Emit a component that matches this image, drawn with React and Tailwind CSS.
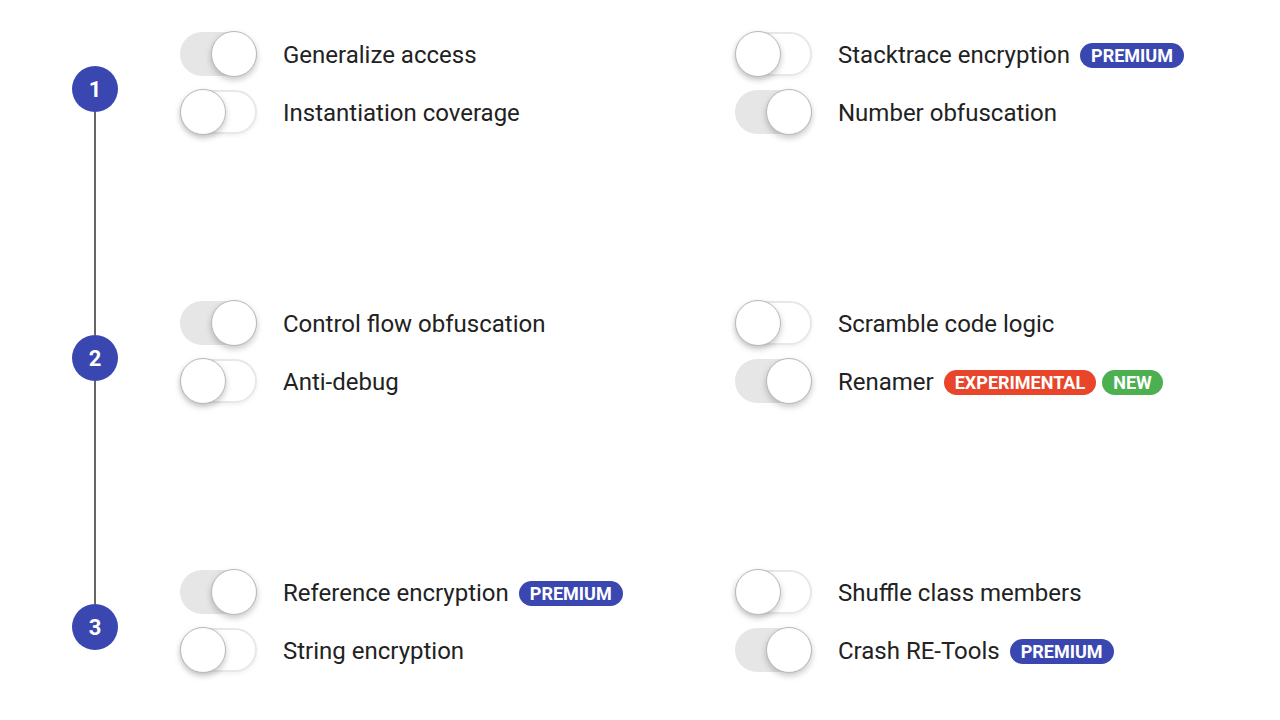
import React from 'react'

const groups = [
  {
    left: [
      { label: 'Generalize access', on: true },
      { label: 'Instantiation coverage', on: false },
    ],
    right: [
      { label: 'Stacktrace encryption', on: false, badges: ['premium'] },
      { label: 'Number obfuscation', on: true },
    ],
  },
  {
    left: [
      { label: 'Control flow obfuscation', on: true },
      { label: 'Anti-debug', on: false },
    ],
    right: [
      { label: 'Scramble code logic', on: false },
      { label: 'Renamer', on: true, badges: ['experimental', 'new'] },
    ],
  },
  {
    left: [
      { label: 'Reference encryption', on: true, badges: ['premium'] },
      { label: 'String encryption', on: false },
    ],
    right: [
      { label: 'Shuffle class members', on: false },
      { label: 'Crash RE-Tools', on: true, badges: ['premium'] },
    ],
  },
]

const badgeStyles = {
  premium: { text: 'PREMIUM', cls: 'bg-[#3a47b0]' },
  experimental: { text: 'EXPERIMENTAL', cls: 'bg-[#e8452a]' },
  new: { text: 'NEW', cls: 'bg-[#4caf50]' },
}

function Toggle({ on }) {
  return (
    <div
      className={
        'relative w-[77px] h-[44px] rounded-full shrink-0 ' +
        (on ? 'bg-[#e6e6e6]' : 'bg-white border-2 border-[#e8e8e8] shadow-[0_2px_4px_rgba(0,0,0,0.06)]')
      }
    >
      <div
        className={
          'absolute top-1/2 -translate-y-1/2 w-[46px] h-[46px] rounded-full bg-white border border-[#b8b8b8] shadow-[0_3px_6px_rgba(0,0,0,0.22)] ' +
          (on ? 'right-0' : '-left-[2px]')
        }
      />
    </div>
  )
}

function Row({ label, on, badges = [] }) {
  return (
    <div className="h-[58px] flex items-center">
      <Toggle on={on} />
      <span className="ml-[26px] mt-[2px] text-[24px] text-[#222]">{label}</span>
      <div className="flex gap-[6px] ml-[10px] mt-[3px]">
        {badges.map((b) => (
          <span
            key={b}
            className={'h-[25px] px-[11px] rounded-full flex items-center text-white font-bold text-[18px] ' + badgeStyles[b].cls}
          >
            {badgeStyles[b].text}
          </span>
        ))}
      </div>
    </div>
  )
}

function Step({ n }) {
  return (
    <div className="w-[46px] h-[46px] rounded-full bg-[#3a47b0] flex items-center justify-center text-white font-bold text-[22px]">
      {n}
    </div>
  )
}

export default function App() {
  return (
    <div
      className="w-[1280px] h-[720px] bg-white flex pl-[72px] overflow-hidden"
      style={{ fontFamily: 'Roboto, "Liberation Sans", sans-serif' }}
    >
      <div className="w-[46px] pt-[66px] flex flex-col items-center">
        <Step n={1} />
        <div className="w-[2px] h-[223px] bg-[#666]" />
        <Step n={2} />
        <div className="w-[2px] h-[223px] bg-[#666]" />
        <Step n={3} />
      </div>
      <div className="ml-[62px] pt-[25px] flex flex-col gap-[153px]">
        {groups.map((g, i) => (
          <div key={i} className="flex">
            <div className="w-[555px] flex flex-col">
              {g.left.map((r) => (
                <Row key={r.label} {...r} />
              ))}
            </div>
            <div className="flex flex-col">
              {g.right.map((r) => (
                <Row key={r.label} {...r} />
              ))}
            </div>
          </div>
        ))}
      </div>
    </div>
  )
}
